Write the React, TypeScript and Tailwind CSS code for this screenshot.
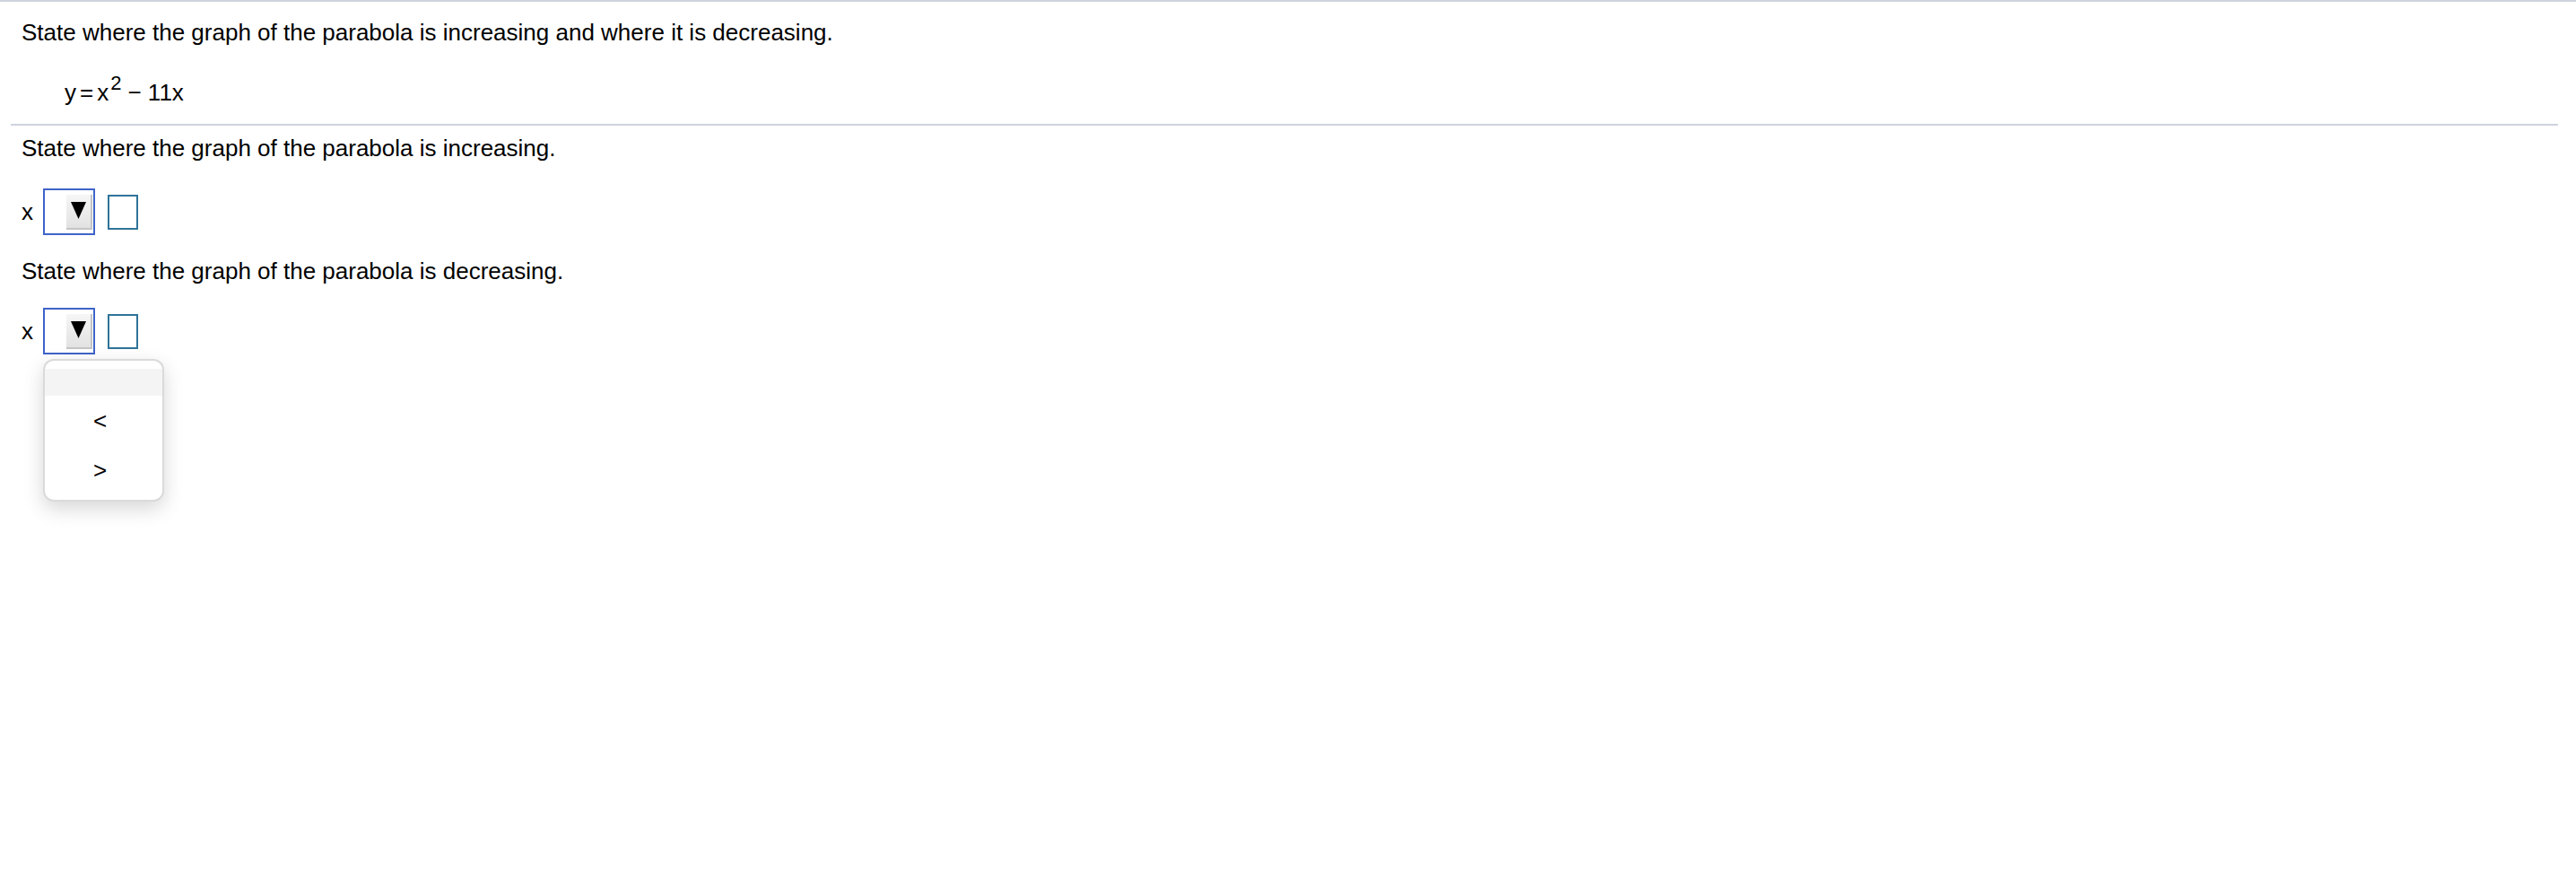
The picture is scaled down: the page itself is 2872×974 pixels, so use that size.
import React from "react";

// Flèche du menu déroulant
function Fleche() {
  return (
    <svg width="17" height="19" viewBox="0 0 17 19" className="block">
      <polygon points="0,0 17,0 8.5,19" fill="#000" />
    </svg>
  );
}

function Selecteur({ ouvert }: { ouvert?: boolean }) {
  return (
    <div className="relative">
      <div className="flex h-[52px] w-[58px] items-center justify-end border-2 border-[#3f63c8] bg-white pr-[1px]">
        <div className="flex h-[39px] w-[29px] items-start justify-center border-r-2 border-b-2 border-[#c4c4c4] bg-gradient-to-b from-[#f6f6f6] to-[#e2e2e2] pt-[8px]">
          <Fleche />
        </div>
      </div>

      {ouvert && (
        <div className="absolute top-full left-0 z-10 mt-[5px] w-[135px] rounded-[12px] border-2 border-[#dadada] bg-white pt-[9px] pb-[6px] shadow-[0_8px_22px_rgba(0,0,0,0.16)]">
          <div className="h-[30px] bg-[#f4f4f4]" />
          <div className="flex h-[55px] items-center justify-center pr-[8px]">&lt;</div>
          <div className="flex h-[55px] items-center justify-center pr-[8px]">&gt;</div>
        </div>
      )}
    </div>
  );
}

function Ligne({ ouvert }: { ouvert?: boolean }) {
  return (
    <div className="flex items-center pl-[24px]">
      <span className="w-[24px]">x</span>
      <Selecteur ouvert={ouvert} />
      <div className="ml-[14px] h-[39px] w-[34px] border-2 border-[#2f7499] bg-white" />
    </div>
  );
}

export default function App() {
  return (
    <div className="min-h-[974px] w-full border-t-2 border-[#cfd3de] bg-white font-['Liberation_Sans',Arial,sans-serif] text-[26px] leading-[30px] text-black">
      <p className="mt-[19px] pl-[24px]">
        State where the graph of the parabola is increasing and where it is
        decreasing.
      </p>

      <p className="mt-[37px] pl-[72px]">
        y<span className="mx-[4px]">=</span>x
        <span className="relative -top-[12px] ml-[2px] text-[22px]">2</span>
        <span className="ml-[7px]">−</span> 11x
      </p>

      <div className="mt-[18px] mr-[20px] ml-[12px] h-[2px] bg-[#cfd3de]" />

      <p className="mt-[10px] pl-[24px]">
        State where the graph of the parabola is increasing.
      </p>

      <div className="mt-[30px]">
        <Ligne />
      </div>

      <p className="mt-[25px] pl-[24px]">
        State where the graph of the parabola is decreasing.
      </p>

      <div className="mt-[26px]">
        <Ligne ouvert />
      </div>
    </div>
  );
}
